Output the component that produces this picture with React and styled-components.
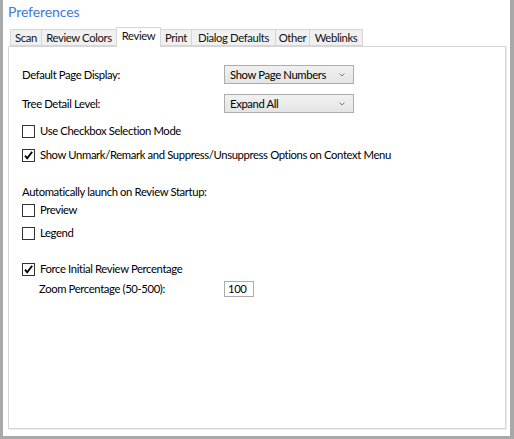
import React from 'react';
import styled, { createGlobalStyle } from 'styled-components';

const GlobalStyle = createGlobalStyle`
  html, body { margin: 0; padding: 0; background: #ffffff; }
  body {
    font-family: "Lato", "Noto Sans", sans-serif;
    font-size: 11.3px;
    letter-spacing: -0.38px;
    color: #000000;
  }
  * { box-sizing: border-box; }
`;

const Window = styled.div`
  width: 514px;
  height: 439px;
  background: #ffffff;
  border: 3px solid #a9a9a9;
  border-top: none;
  border-right-width: 4px;
  padding-left: 5px;
  display: flex;
  flex-direction: column;
`;

const Title = styled.div`
  height: 27px;
  padding-top: 3px;
  font-size: 14px;
  letter-spacing: -0.1px;
  line-height: 17px;
  color: #4179dc;
`;

const TabStrip = styled.div`
  height: 19px;
  display: flex;
  align-items: flex-end;
  padding-left: 2px;
  position: relative;
  z-index: 1;
`;

const Tab = styled.div`
  width: ${p => p.$w}px;
  height: ${p => (p.$active ? 20 : 17)}px;
  margin-left: -1px;
  margin-bottom: ${p => (p.$active ? -1 : 0)}px;
  &:first-child { margin-left: 0; }
  background: ${p => (p.$active ? '#ffffff' : '#f0f0f0')};
  border: 1px solid #d6d6d6;
  border-bottom: ${p => (p.$active ? 'none' : '1px solid #d6d6d6')};
  position: relative;
  z-index: ${p => (p.$active ? 2 : 1)};
  display: flex;
  align-items: center;
  justify-content: center;
  line-height: 14px;
  padding-bottom: ${p => (p.$active ? 3 : 0)}px;
  color: #111;
  white-space: nowrap;
`;

const Panel = styled.div`
  width: 498px;
  height: 383px;
  border: 1px solid #d6d6d6;
  box-shadow: 1px 1px 0 #ececec;
  background: #ffffff;
  padding: 18px 13px 0 13px;
  display: flex;
  flex-direction: column;
`;

const FieldRow = styled.div`
  display: grid;
  grid-template-columns: ${p => p.$label}px auto;
  align-items: center;
  margin-top: ${p => p.$mt || 0}px;
  padding-left: ${p => p.$indent || 0}px;
  height: ${p => p.$h || 19}px;
`;

const Label = styled.span`
  line-height: 16px;
  white-space: nowrap;
`;

const Select = styled.div`
  width: 130px;
  height: 19px;
  border: 1px solid #adadad;
  background: linear-gradient(#f1f1f1, #e4e4e4);
  display: flex;
  align-items: center;
  justify-content: space-between;
  padding: 0 8px 0 5px;
  white-space: nowrap;
`;

const Chevron = () => (
  <svg width="6" height="4" viewBox="0 0 6 4">
    <polyline points="0.5,0.5 3,3 5.5,0.5" fill="none" stroke="#7a7a7a" strokeWidth="1" />
  </svg>
);

const TextInput = styled.div`
  width: 30px;
  height: 16px;
  border: 1px solid #ababab;
  background: #fff;
  padding-left: 3px;
  line-height: 14px;
`;

const CheckRow = styled.div`
  display: flex;
  align-items: center;
  gap: 5px;
  height: 16px;
  margin-top: ${p => p.$mt || 0}px;
`;

const Box = styled.span`
  width: 13px;
  height: 13px;
  border: 1px solid #333;
  background: #fff;
  display: flex;
  align-items: center;
  justify-content: center;
  flex: none;
`;

const Heading = styled.div`
  height: 16px;
  line-height: 16px;
  margin-top: ${p => p.$mt || 0}px;
  white-space: nowrap;
`;

const Check = ({ checked, children, mt }) => (
  <CheckRow $mt={mt}>
    <Box>
      {checked && (
        <svg width="11" height="11" viewBox="0 0 11 11">
          <polyline points="2,5.6 4.2,8.4 9.2,1.8" fill="none" stroke="#000" strokeWidth="1.8" />
        </svg>
      )}
    </Box>
    <Label>{children}</Label>
  </CheckRow>
);

const tabs = [
  { name: 'Scan', w: 32 },
  { name: 'Review Colors', w: 76 },
  { name: 'Review', w: 45, active: true },
  { name: 'Print', w: 32 },
  { name: 'Dialog Defaults', w: 85 },
  { name: 'Other', w: 35 },
  { name: 'Weblinks', w: 54 },
];

export default function App() {
  return (
    <>
      <GlobalStyle />
      <Window>
        <Title>Preferences</Title>
        <TabStrip>
          {tabs.map(t => (
            <Tab key={t.name} $w={t.w} $active={t.active}>{t.name}</Tab>
          ))}
        </TabStrip>
        <Panel>
          <FieldRow $label={202}>
            <Label>Default Page Display:</Label>
            <Select>Show Page Numbers<Chevron /></Select>
          </FieldRow>
          <FieldRow $label={202} $mt={10}>
            <Label>Tree Detail Level:</Label>
            <Select>Expand All<Chevron /></Select>
          </FieldRow>
          <Check mt={10}>Use Checkbox Selection Mode</Check>
          <Check mt={8} checked>Show Unmark/Remark and Suppress/Unsuppress Options on Context Menu</Check>

          <Heading $mt={21}>Automatically launch on Review Startup:</Heading>
          <Check mt={2}>Preview</Check>
          <Check mt={7}>Legend</Check>

          <Check mt={20} checked>Force Initial Review Percentage</Check>
          <FieldRow $label={185} $indent={17} $mt={4} $h={16}>
            <Label>Zoom Percentage (50-500):</Label>
            <TextInput>100</TextInput>
          </FieldRow>
        </Panel>
      </Window>
    </>
  );
}
